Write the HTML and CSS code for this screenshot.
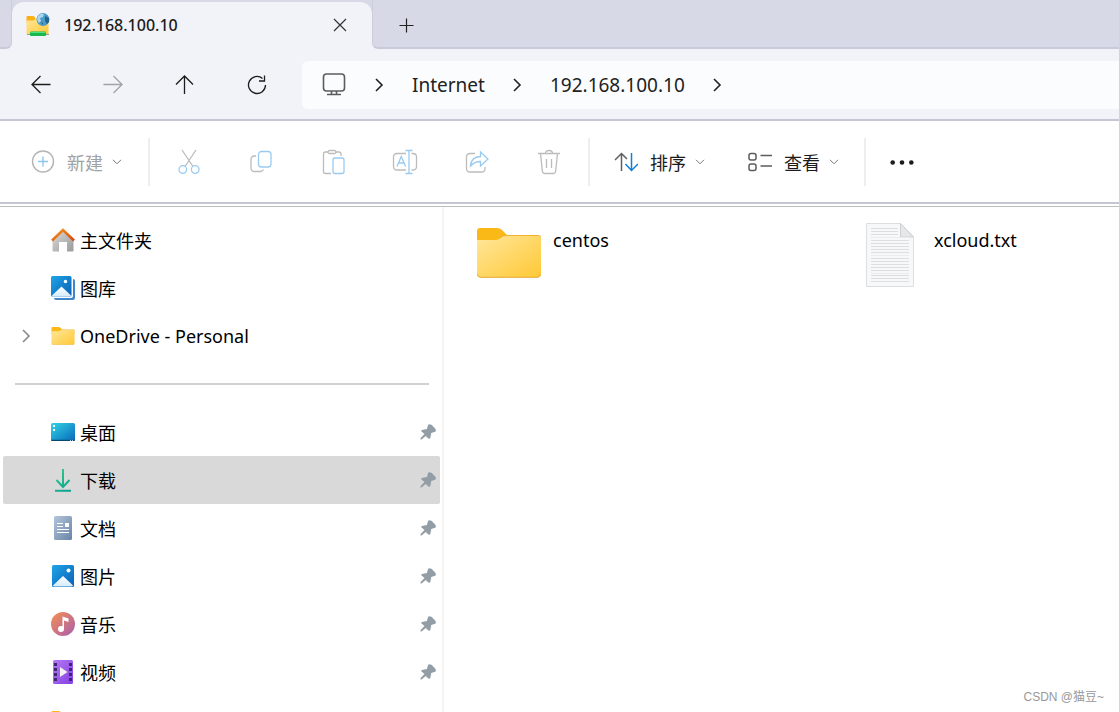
FILE: index.html
```html
<!DOCTYPE html>
<html lang="zh-CN">
<head>
    <meta charset="UTF-8">
    <title>192.168.100.10</title>
    <link rel="stylesheet" href="styles.css">
</head>
<body>
<!-- shared icons -->
<svg class="sprite" width="0" height="0">
    <defs>
        <linearGradient id="folderFill" x1="0" y1="0" x2="1" y2="1">
            <stop offset="0" stop-color="#ffe69a"/>
            <stop offset="1" stop-color="#ffc936"/>
        </linearGradient>
        <linearGradient id="blueFill" x1="0" y1="0" x2="1" y2="1">
            <stop offset="0" stop-color="#1fa5e8"/>
            <stop offset="1" stop-color="#0a5fb4"/>
        </linearGradient>
        <linearGradient id="snowFill" x1="0" y1="0" x2="0" y2="1">
            <stop offset="0" stop-color="#ffffff"/>
            <stop offset="1" stop-color="#d5ecfb"/>
        </linearGradient>
    </defs>
    <symbol id="folder" viewBox="0 0 64 50">
        <path d="M0 3q0-3 3-3h17q3 0 5 2l6 6v12H0z" fill="#fbb917"/>
        <path d="M24 7h37q3 0 3 3v10H18z" fill="#f2b230"/>
        <path d="M0 12h17q4 0 6-1.500l3-2q1-.5 3-.5h32q3 0 3 3v35q0 3-3 3H3q-3 0-3-3z" fill="url(#folderFill)"/>
        <path d="M.5 46.500q.5 2.500 2.500 2.800h58q2-.3 2.500-2.800" fill="none" stroke="#e3a52c"/>
    </symbol>
    <symbol id="chevron-right" viewBox="0 0 10 14">
        <path d="M2 1l6 6-6 6" fill="none" stroke="currentColor" stroke-width="1.600"/>
    </symbol>
    <symbol id="chevron-down" viewBox="0 0 10 6">
        <path d="M1 .8l4 4 4-4" fill="none" stroke="currentColor"/>
    </symbol>
    <symbol id="pin" viewBox="0 0 16 16">
        <path d="M9 .3l2.500.4 4.300 4.500-.1 2.300-4.400 1.600-1.100 5.300-1.600.4-2.800-2.700-4.300 3.500-1-.2.1-1.300 3.900-4.200L1.200 7.200l.5-1.200 5.300-.9L8 1z" fill="#929da5"/>
    </symbol>
</svg>

<div class="tab-bar">
    <div class="tab-left"></div>
    <div class="tab">
        <svg class="tab-icon" width="24" height="24" viewBox="0 0 24 24">
            <path d="M.5 4q0-1 1-1h6l2 2v5h-9z" fill="#fbb013"/>
            <path d="M.5 7.500h7L10 5.500h12.500V21h-22z" fill="url(#folderFill)"/>
            <path d="M1 21.500h22" stroke="#9c9c9c"/>
            <rect x="4" y="18.500" width="16" height="4.500" rx="1" fill="#17b84e"/>
            <path d="M4.500 19.500h15" stroke="#4fe283"/>
            <circle cx="17" cy="6.500" r="6.500" fill="#4b9ac8"/>
            <path d="M12 3q3-3 6-2l-1 3-3 1 1 3-2 2q-3-3-1-7z" fill="#a9d8ee"/>
            <path d="M19 3l4 2v4l-2 2-2-3zM15 9l2 1v2z" fill="#23648f"/>
        </svg>
        <span class="tab-title">192.168.100.10</span>
        <button class="tab-close" aria-label="关闭">
            <svg width="14" height="14" viewBox="0 0 14 14"><path d="M1 1l12 12M13 1L1 13" stroke="#333" stroke-width="1.200"/></svg>
        </button>
    </div>
    <div class="tab-right">
        <button class="tab-add" aria-label="新标签页">
            <svg width="16" height="16" viewBox="0 0 16 16"><path d="M.5 7.500h14M7.500 .5v14" stroke="#222" stroke-width="1.200"/></svg>
        </button>
    </div>
</div>

<div class="nav-bar">
    <button class="nav-button" aria-label="后退">
        <svg width="20" height="20" viewBox="0 0 20 20"><path d="M19.500 9.500H1.500M9.500 1L1 9.500 9.500 18"/></svg>
    </button>
    <button class="nav-button" aria-label="前进" disabled>
        <svg width="20" height="20" viewBox="0 0 20 20"><path d="M.5 9.500h18M10.500 1L19 9.500 10.500 18"/></svg>
    </button>
    <button class="nav-button" aria-label="向上">
        <svg width="20" height="20" viewBox="0 0 20 20"><path d="M9.500 19V1.500M1 9.500L9.500 1 18 9.500"/></svg>
    </button>
    <button class="nav-button" aria-label="刷新">
        <svg width="20" height="20" viewBox="0 0 20 20"><path d="M15.500 3.500A8.500 8.500 0 1 0 18.500 10M17.500.5V6h-5.500"/></svg>
    </button>
    <nav class="address">
        <svg class="monitor" width="24" height="24" viewBox="0 0 24 24" fill="none" stroke="#5c5c5c" stroke-width="1.600">
            <rect x="1.500" y="1" width="21" height="17" rx="3"/>
            <path d="M9.500 18v3.500M14.500 18v3.500M5 21.500h14"/>
        </svg>
        <svg class="crumb-arrow" width="10" height="14"><use href="#chevron-right"/></svg>
        <a href="#">Internet</a>
        <svg class="crumb-arrow" width="10" height="14"><use href="#chevron-right"/></svg>
        <a href="#">192.168.100.10</a>
        <svg class="crumb-arrow" width="10" height="14"><use href="#chevron-right"/></svg>
    </nav>
</div>

<div class="toolbar">
    <button class="new-button" disabled>
        <svg width="24" height="24" viewBox="0 0 24 24" fill="none" stroke-width="1.400">
            <circle cx="12" cy="11.500" r="10.500" stroke="#b5b5b5"/>
            <path d="M12 6.500v10M7 11.500h10" stroke="#8dc5ee"/>
        </svg>
        <span>新建</span>
        <svg class="arrow" width="10" height="6"><use href="#chevron-down"/></svg>
    </button>
    <div class="separator"></div>
    <div class="icon-group">
        <button class="icon-button" aria-label="剪切" disabled>
            <svg width="24" height="26" viewBox="0 0 24 26">
                <path class="gray" d="M5 1l11 16.500M19 1L8 17.500"/>
                <circle class="blue" cx="5.800" cy="20.500" r="3.800"/>
                <circle class="blue" cx="18.200" cy="20.500" r="3.800"/>
            </svg>
        </button>
        <button class="icon-button" aria-label="复制" disabled>
            <svg width="24" height="26" viewBox="0 0 24 26">
                <path class="gray" d="M7 7H5.500Q2 7 2 10.500v8.500q0 3.500 3.500 3.500h6q2 0 3-2"/>
                <rect class="blue" x="9.500" y="2.500" width="12.500" height="15.500" rx="3"/>
            </svg>
        </button>
        <button class="icon-button" aria-label="粘贴" disabled>
            <svg width="24" height="26" viewBox="0 0 24 26">
                <path class="gray" d="M7 3H4.500q-2 0-2 2v17.500q0 2 2 2H10M15 3h3q2 0 2 2v2"/>
                <rect class="gray" x="7" y="1.500" width="8" height="3" rx="1.500"/>
                <rect class="blue" x="12" y="9" width="11" height="15.500" rx="2"/>
            </svg>
        </button>
        <button class="icon-button" aria-label="重命名" disabled>
            <svg width="26" height="26" viewBox="0 0 26 26">
                <path class="gray" d="M14 4.500H5q-3.500 0-3.500 3.500v9.500q0 3.500 3.500 3.500h9M19.500 4.500h1.500q3.500 0 3.500 3.500v9.500q0 3.500-3.500 3.500h-1.500"/>
                <path class="blue" d="M5 17.500l4.300-10 4.300 10M6.500 14h5.700M17 1.500v23M13.500 1.500h7M13.500 24.500h7"/>
            </svg>
        </button>
        <button class="icon-button" aria-label="共享" disabled>
            <svg width="24" height="26" viewBox="0 0 24 26">
                <path class="gray" d="M10 4.500H5q-3.500 0-3.500 3.500v11.500Q1.500 23 5 23h11.500q3.500 0 3.500-3.500V18"/>
                <path class="blue" d="M15.500 3v4.500Q6 8 5.500 17q4-4.500 10-4.500V17l7.500-7z"/>
            </svg>
        </button>
        <button class="icon-button" aria-label="删除" disabled>
            <svg width="24" height="26" viewBox="0 0 24 26">
                <path class="gray" d="M1 4.500h22M8.500 4.500q0-3 3.500-3t3.500 3M3.500 4.500l1.800 17.500q.3 2.500 2.500 2.500h8.400q2.200 0 2.500-2.500l1.800-17.500M9.500 10v9M14.500 10v9"/>
            </svg>
        </button>
    </div>
    <div class="separator"></div>
    <div class="menu-group">
        <button class="menu-button">
            <svg width="24" height="20" viewBox="0 0 24 20" fill="none" stroke-width="1.500">
                <path d="M7.500 19V1.500M1 8l6.500-6.500L13 7" stroke="#606060"/>
                <path d="M17.500 1v17.500M11.500 12l6 6.500L24 12" stroke="#0f7fd8"/>
            </svg>
            <span>排序</span>
            <svg class="arrow" width="10" height="6"><use href="#chevron-down"/></svg>
        </button>
        <button class="menu-button">
            <svg width="24" height="20" viewBox="0 0 24 20" fill="none" stroke="#5c5c5c" stroke-width="1.500">
                <rect x="1" y="1.500" width="7" height="6.500" rx="2"/>
                <rect x="1" y="12" width="7" height="6.500" rx="2"/>
                <path d="M12.500 3.500H24M12.500 14H24"/>
            </svg>
            <span>查看</span>
            <svg class="arrow" width="10" height="6"><use href="#chevron-down"/></svg>
        </button>
    </div>
    <div class="separator"></div>
    <button class="more-button" aria-label="更多">
        <svg width="24" height="6" viewBox="0 0 24 6" fill="#1c1c1c"><circle cx="2.700" cy="3.500" r="2.300"/><circle cx="12" cy="3.500" r="2.300"/><circle cx="21.300" cy="3.500" r="2.300"/></svg>
    </button>
</div>

<div class="main">
    <div class="sidebar">
        <a class="item" href="#">
            <svg class="item-icon" width="24" height="24" viewBox="0 0 24 24">
                <defs>
                    <linearGradient id="wall" x1="0" y1="0" x2="1" y2="1"><stop offset="0" stop-color="#dcdcdc"/><stop offset="1" stop-color="#9a9a9a"/></linearGradient>
                    <linearGradient id="roof" x1="0" y1="0" x2="1" y2="1"><stop offset="0" stop-color="#f59a1c"/><stop offset="1" stop-color="#d8430c"/></linearGradient>
                </defs>
                <path d="M1.500 12L12 2l10.500 10v10.500q0 1-1 1H16v-9.500H8v9.500H2.500q-1 0-1-1z" fill="url(#wall)"/>
                <path d="M1 12.500L12 2l11 10.500" fill="none" stroke="url(#roof)" stroke-width="2.600"/>
            </svg>
            <span>主文件夹</span>
        </a>
        <a class="item" href="#">
            <svg class="item-icon" width="24" height="24" viewBox="0 0 24 24">
                <path d="M22 3q2 0 2 2v16.500q0 2.500-2.500 2.500H5q-2 0-2-2h17q2 0 2-2z" fill="#3f86cc"/>
                <rect width="20.500" height="20.500" rx="1.500" fill="url(#blueFill)"/>
                <path d="M1 19.500l9.500-9 9.500 9q-.5 1-1.500 1H2q-.7 0-1-1z" fill="url(#snowFill)"/>
                <circle cx="14.500" cy="5.500" r="1.700" fill="#fff"/>
            </svg>
            <span>图库</span>
        </a>
        <a class="item" href="#">
            <svg class="expand" width="10" height="14"><use href="#chevron-right"/></svg>
            <svg class="item-icon" width="24" height="18"><use href="#folder"/></svg>
            <span>OneDrive - Personal</span>
        </a>
        <hr class="divider">
        <a class="item" href="#">
            <svg class="item-icon" width="24" height="24" viewBox="0 0 24 24">
                <defs><linearGradient id="desk" x1="0" y1="0" x2="1" y2="1"><stop offset="0" stop-color="#31d5e4"/><stop offset="1" stop-color="#0867bd"/></linearGradient></defs>
                <rect y="3" width="24" height="18" rx="1.500" fill="url(#desk)"/>
                <path d="M0 19.800h24q0 1.200-1.500 1.200h-21Q0 21 0 19.800z" fill="#08476f"/>
                <path d="M2 5h2v2H2zM2 9h2v2H2z" fill="#fff"/>
                <path d="M19 20.400h4" stroke="#b9dff5" stroke-dasharray="1 1"/>
            </svg>
            <span>桌面</span>
            <svg class="pin" width="16" height="16"><use href="#pin"/></svg>
        </a>
        <a class="item selected" href="#">
            <svg class="item-icon" width="24" height="24" viewBox="0 0 24 24">
                <defs><linearGradient id="down" gradientUnits="userSpaceOnUse" x1="4" y1="0" x2="20" y2="24"><stop offset="0" stop-color="#36cf83"/><stop offset="1" stop-color="#089e93"/></linearGradient></defs>
                <path d="M12 1v17.500M5.500 12l6.500 7 6.500-7M4 22.800h16" fill="none" stroke="url(#down)" stroke-width="2"/>
            </svg>
            <span>下载</span>
            <svg class="pin" width="16" height="16"><use href="#pin"/></svg>
        </a>
        <a class="item" href="#">
            <svg class="item-icon" width="24" height="24" viewBox="0 0 24 24">
                <defs><linearGradient id="doc" x1="0" y1="0" x2="1" y2="1"><stop offset="0" stop-color="#b3c5da"/><stop offset="1" stop-color="#6884a6"/></linearGradient></defs>
                <rect x="3" width="18" height="24" rx="1.500" fill="url(#doc)"/>
                <path d="M6 7.500h6M6 10.500h6M6 13.500h12M6 16.500h12" stroke="#fff" stroke-width="1.200"/>
                <rect x="14" y="7" width="4" height="4" fill="#fff"/>
            </svg>
            <span>文档</span>
            <svg class="pin" width="16" height="16"><use href="#pin"/></svg>
        </a>
        <a class="item" href="#">
            <svg class="item-icon" width="24" height="24" viewBox="0 0 24 24">
                <rect x="1" y="1" width="22" height="22" rx="1.500" fill="url(#blueFill)"/>
                <path d="M2 21.500l10-9.500 10 9.500q-.5 1-1.500 1h-17q-1 0-1.500-1z" fill="url(#snowFill)"/>
                <circle cx="17.500" cy="6.500" r="2" fill="#fff"/>
            </svg>
            <span>图片</span>
            <svg class="pin" width="16" height="16"><use href="#pin"/></svg>
        </a>
        <a class="item" href="#">
            <svg class="item-icon" width="24" height="24" viewBox="0 0 24 24">
                <defs><linearGradient id="music" x1="0" y1="0" x2="1" y2="1"><stop offset=".1" stop-color="#ee8b58"/><stop offset="1" stop-color="#a95db0"/></linearGradient></defs>
                <circle cx="12" cy="12" r="12" fill="url(#music)"/>
                <circle cx="10" cy="17" r="3" fill="#fff"/>
                <path d="M11.500 17V4.500l6 2V10l-4.500-1.500V17z" fill="#fff"/>
            </svg>
            <span>音乐</span>
            <svg class="pin" width="16" height="16"><use href="#pin"/></svg>
        </a>
        <a class="item" href="#">
            <svg class="item-icon" width="24" height="24" viewBox="0 0 24 24">
                <defs><linearGradient id="video" x1="0" y1="0" x2="1" y2="1"><stop offset="0" stop-color="#b578f2"/><stop offset="1" stop-color="#8440e4"/></linearGradient></defs>
                <rect x="2" width="20" height="24" rx="1.500" fill="url(#video)"/>
                <path d="M4.500 3v20M19.500 3v20" stroke="#3f2670" stroke-width="3" stroke-dasharray="3 2"/>
                <path d="M9 7l7.500 5L9 17z" fill="#f2f2f2"/>
            </svg>
            <span>视频</span>
            <svg class="pin" width="16" height="16"><use href="#pin"/></svg>
        </a>
        <a class="item" href="#">
            <svg class="item-icon" width="24" height="18"><use href="#folder"/></svg>
        </a>
    </div>
    <div class="files">
        <a class="file" href="#">
            <svg width="64" height="64" viewBox="0 0 64 64"><use href="#folder" y="5" width="64" height="50"/></svg>
            <span>centos</span>
        </a>
        <a class="file" href="#">
            <svg width="64" height="64" viewBox="0 0 64 64">
                <path d="M8.500.5h34l13 13v50h-47z" fill="#f7f8f9" stroke="#dcdedf"/>
                <path d="M42.500.5v13.500h13z" fill="#e6e7e8" stroke="#cfd1d2"/>
                <path d="M13 5.500h27M13 8.500h27M13 11.500h27M13 17.500h38M13 20.500h38M13 23.500h38M13 26.500h38M13 29.500h38M13 35.500h38M13 38.500h38M13 41.500h38M13 44.500h38M13 47.500h38M13 52.500h38M13 55.500h38M13 58.500h38" stroke="#dcdee0"/>
                <path d="M13 14.500h38M13 32.500h38M13 50.500h38" stroke="#ebecee"/>
            </svg>
            <span>xcloud.txt</span>
        </a>
    </div>
</div>
<div class="watermark">CSDN @猫豆~</div>
</body>
</html>
```
FILE: styles.css
```css
* {
    box-sizing: border-box;
}

body {
    margin: 0;
    height: 100vh;
    display: flex;
    flex-direction: column;
    overflow: hidden;
    background-color: #ffffff;
    color: #000000;
    font-family: "Noto Sans", "Noto Sans CJK SC", sans-serif;
    font-size: 18px;
}

button {
    padding: 0;
    border: none;
    background: none;
    color: #1c1c1c;
    font-family: inherit;
    font-size: 18px;
    display: flex;
    align-items: center;
    justify-content: center;
}

a {
    color: inherit;
    text-decoration: none;
}

svg {
    flex: none;
}

.sprite {
    position: absolute;
}

/* tabs */
.tab-bar {
    display: flex;
    flex: none;
    height: 49px;
    background: linear-gradient(#d7d9e6 24px, #f2f3f8 24px);
}

.tab-left,
.tab-right {
    background-color: #d7d9e6;
    border-bottom: 2px solid #c9cad9;
}

.tab-left {
    width: 12px;
    border-right: 1px solid #cdcedc;
    border-bottom-right-radius: 6px;
}

.tab-right {
    flex: 1;
    display: flex;
    align-items: center;
    padding: 4px 0 0 18px;
    border-left: 1px solid #cdcedc;
    border-bottom-left-radius: 6px;
}

.tab {
    display: flex;
    align-items: center;
    width: 360px;
    margin-top: 2px;
    padding: 0 16px 2px 14px;
    background-color: #f2f3f8;
    border-radius: 12px 12px 0 0;
}

.tab-title {
    flex: 1;
    margin-left: 14px;
    color: #1c1c1c;
    font-size: 16px;
    font-weight: 500;
}

.tab-close,
.tab-add {
    width: 32px;
    height: 32px;
}

/* navigation */
.nav-bar {
    display: flex;
    align-items: center;
    flex: none;
    height: 72px;
    padding: 2px 0 0 5px;
    background-color: #f2f3f8;
    border-bottom: 2px solid #c4c6d3;
}

.nav-button {
    width: 72px;
    height: 48px;
}

.nav-button path {
    fill: none;
    stroke: #1c1c1c;
    stroke-width: 1.3;
}

.nav-button:disabled path {
    stroke: #a2a2a6;
}

.address {
    flex: 1;
    display: flex;
    align-items: center;
    height: 48px;
    margin-left: 9px;
    padding-left: 20px;
    background-color: #fbfcfe;
    border-radius: 6px 0 0 6px;
    color: #222222;
    font-size: 19px;
}

.monitor {
    margin-right: 1px;
}

.crumb-arrow {
    margin: 0 28px 0 27px;
}

/* toolbar */
.toolbar {
    display: flex;
    align-items: center;
    flex: none;
    height: 83px;
    border-bottom: 2px solid #c4c6d3;
}

.new-button {
    height: 48px;
    padding: 0 26px 0 31px;
    color: #a2a2a2;
}

.new-button span,
.menu-button span {
    margin: 0 9px 0 12px;
}

.arrow {
    color: #777777;
}

.separator {
    width: 2px;
    height: 48px;
    background-color: #eeeeee;
}

.icon-group {
    display: flex;
    padding: 0 3px;
}

.icon-button {
    width: 72px;
    height: 48px;
}

.icon-button .gray,
.icon-button .blue {
    fill: none;
    stroke: #bcbcbc;
    stroke-width: 1.3;
}

.icon-button .blue {
    stroke: #99cbf0;
}

.menu-group {
    display: flex;
    gap: 3px;
    padding: 0 5px 0 4px;
}

.menu-button {
    height: 48px;
    padding: 0 20px;
}

.more-button {
    width: 72px;
    height: 48px;
}

/* content */
.main {
    flex: 1;
    display: flex;
    min-height: 0;
    margin-top: 2px;
    border-top: 1px solid #bcbcbc;
}

.sidebar {
    width: 444px;
    padding: 9px 2px 0 3px;
    border-right: 2px solid #f5f5f5;
    overflow: hidden;
}

.item {
    position: relative;
    display: flex;
    align-items: center;
    height: 48px;
    padding: 0 4px 0 48px;
    border-radius: 2px;
}

.item span {
    flex: 1;
    margin-left: 5px;
}

.item.selected {
    background-color: #d9d9d9;
}

.expand {
    position: absolute;
    left: 18px;
    color: #888888;
}

.divider {
    height: 2px;
    margin: 23px 11px 23px 12px;
    border: none;
    background-color: #d2d2d2;
}

.files {
    flex: 1;
    display: grid;
    grid-template-columns: 381px 1fr;
    align-content: start;
    padding: 16px 0 0 33px;
}

.file {
    display: flex;
    gap: 12px;
}

.file span {
    line-height: 34px;
}

.watermark {
    position: absolute;
    right: 15px;
    bottom: 7px;
    color: #999999;
    font-family: "Liberation Sans", "Noto Sans CJK SC", sans-serif;
    font-size: 12px;
    line-height: 16px;
}
```
